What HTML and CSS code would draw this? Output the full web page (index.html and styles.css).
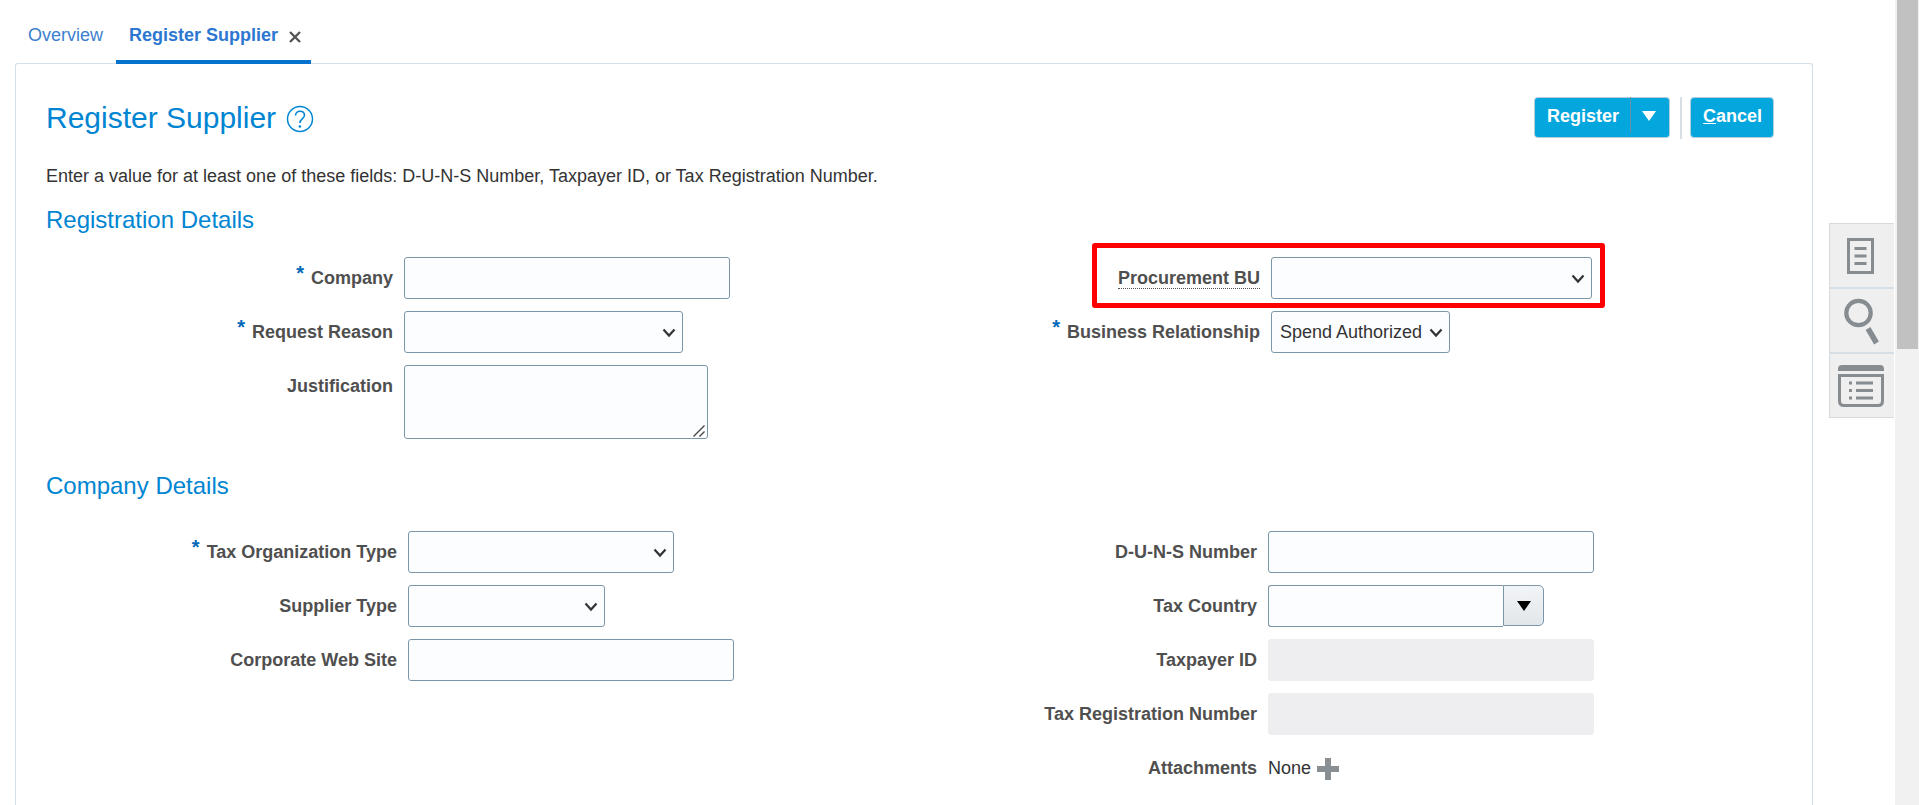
FILE: index.html
```html
<!DOCTYPE html>
<html lang="en">
<head>
    <meta charset="UTF-8">
    <meta name="viewport" content="width=device-width, initial-scale=1.0">
    <title>Register Supplier</title>
    <link rel="stylesheet" href="styles.css">
</head>
<body>
    <svg class="icon-defs" aria-hidden="true">
        <symbol id="chevron" viewBox="0 0 14 10">
            <path d="M1.5 1.5L7 7.5L12.5 1.5" fill="none" stroke="#333" stroke-width="2.2"/>
        </symbol>
    </svg>

    <main class="main">
        <nav class="tabs">
            <a href="#" class="tab">Overview</a>
            <div class="tab tab-active">
                <a href="#">Register Supplier</a>
                <button type="button" class="tab-close" aria-label="Close">
                    <svg width="12" height="12" viewBox="0 0 12 12"><path d="M1 1L11 11M11 1L1 11" stroke="#555" stroke-width="2.4"/></svg>
                </button>
            </div>
        </nav>

        <form class="panel" id="registerForm">
            <header class="panel-header">
                <h1>Register Supplier</h1>
                <button type="button" class="help" aria-label="Help">
                    <svg width="28" height="28" viewBox="0 0 28 28" fill="none" stroke="#0085d2">
                        <circle cx="14" cy="14" r="12.5" stroke-width="1.5"/>
                        <path d="M9.5 10.5C9.5 4.8 18.7 4.8 18.5 10.3C18.4 13.8 13.9 14.2 13.9 18" stroke-width="1.6"/>
                        <circle cx="13.9" cy="21.5" r="1.3" fill="#0085d2" stroke="none"/>
                    </svg>
                </button>
                <div class="actions">
                    <div class="split-button">
                        <button type="submit" class="btn btn-main">Register</button>
                        <button type="button" class="btn btn-menu" aria-label="More actions">
                            <svg width="14" height="10" viewBox="0 0 14 10"><path d="M0 0H14L7 10Z" fill="#fff"/></svg>
                        </button>
                    </div>
                    <span class="divider"></span>
                    <button type="button" class="btn"><u>C</u>ancel</button>
                </div>
            </header>

            <p class="hint">Enter a value for at least one of these fields: D-U-N-S Number, Taxpayer ID, or Tax Registration Number.</p>

            <section>
                <h2>Registration Details</h2>
                <div class="columns registration">
                    <div class="column">
                        <div class="row">
                            <label for="company"><span class="required">*</span>Company</label>
                            <input type="text" id="company" class="wide">
                        </div>
                        <div class="row">
                            <label for="reason"><span class="required">*</span>Request Reason</label>
                            <div class="select reason">
                                <select id="reason"><option></option></select>
                                <svg><use href="#chevron"/></svg>
                            </div>
                        </div>
                        <div class="row">
                            <label for="justification">Justification</label>
                            <div class="textarea">
                                <textarea id="justification"></textarea>
                                <svg viewBox="0 0 12 12"><path d="M0.5 11.5L11.5 0.5M6.5 11.5L11.5 6.5" stroke="#444" stroke-width="1.4"/></svg>
                            </div>
                        </div>
                    </div>
                    <div class="column">
                        <div class="row highlighted">
                            <label for="bu"><span class="dotted">Procurement BU</span></label>
                            <div class="select bu">
                                <select id="bu"><option></option></select>
                                <svg><use href="#chevron"/></svg>
                            </div>
                        </div>
                        <div class="row">
                            <label for="relationship"><span class="required">*</span>Business Relationship</label>
                            <div class="select relationship">
                                <select id="relationship"><option>Spend Authorized</option></select>
                                <svg><use href="#chevron"/></svg>
                            </div>
                        </div>
                    </div>
                </div>
            </section>

            <section>
                <h2>Company Details</h2>
                <div class="columns company">
                    <div class="column">
                        <div class="row">
                            <label for="orgType"><span class="required">*</span>Tax Organization Type</label>
                            <div class="select org-type">
                                <select id="orgType"><option></option></select>
                                <svg><use href="#chevron"/></svg>
                            </div>
                        </div>
                        <div class="row">
                            <label for="supplierType">Supplier Type</label>
                            <div class="select supplier-type">
                                <select id="supplierType"><option></option></select>
                                <svg><use href="#chevron"/></svg>
                            </div>
                        </div>
                        <div class="row">
                            <label for="site">Corporate Web Site</label>
                            <input type="text" id="site" class="wide">
                        </div>
                    </div>
                    <div class="column">
                        <div class="row">
                            <label for="duns">D-U-N-S Number</label>
                            <input type="text" id="duns" class="wide">
                        </div>
                        <div class="row">
                            <label for="country">Tax Country</label>
                            <div class="combo">
                                <input type="text" id="country">
                                <button type="button" aria-label="Search: Tax Country">
                                    <svg width="14" height="10" viewBox="0 0 14 10"><path d="M0 0H14L7 10Z"/></svg>
                                </button>
                            </div>
                        </div>
                        <div class="row">
                            <label for="taxpayer">Taxpayer ID</label>
                            <input type="text" id="taxpayer" class="wide" disabled>
                        </div>
                        <div class="row">
                            <label for="taxNumber">Tax Registration Number</label>
                            <input type="text" id="taxNumber" class="wide" disabled>
                        </div>
                        <div class="row">
                            <label for="attach">Attachments</label>
                            <div class="attachments">
                                None
                                <button type="button" id="attach" aria-label="Add attachment">
                                    <svg width="22" height="22" viewBox="0 0 22 22"><path d="M8 0H14V8H22V14H14V22H8V14H0V8H8Z" fill="#8a8f93"/></svg>
                                </button>
                            </div>
                        </div>
                    </div>
                </div>
            </section>
        </form>
    </main>

    <aside class="tools">
        <button type="button" aria-label="Worklist">
            <svg width="48" height="50" viewBox="0 0 48 50" fill="none" stroke="#868c90" stroke-width="3">
                <path d="M11.5 8.5H35.5V41.5H11.5Z"/>
                <path d="M17.500 17.500H29.500M17.500 25H29.500M17.500 32.500H29.500"/>
            </svg>
        </button>
        <button type="button" aria-label="Search">
            <svg width="48" height="50" viewBox="0 0 48 50" fill="none" stroke="#868c90">
                <circle cx="21.5" cy="17" r="12.2" stroke-width="4.2"/>
                <path d="M31 32.5L39.5 47" stroke-width="5.5"/>
            </svg>
        </button>
        <button type="button" aria-label="Contents">
            <svg width="48" height="50" viewBox="0 0 48 50" fill="none" stroke="#868c90" stroke-width="3">
                <path d="M1 10V8Q1 4 5 4H43Q47 4 47 8V10Z" fill="#868c90" stroke="none"/>
                <path d="M2.5 14.5H45.5V40Q45.5 44.5 41 44.5H7Q2.5 44.5 2.5 40Z"/>
                <path d="M12 22H15M19 22H36M12 29.5H15M19 29.5H36M12 37H15M19 37H36"/>
            </svg>
        </button>
    </aside>

    <div class="scrollbar"><div class="scrollbar-thumb"></div></div>
</body>
</html>
```

FILE: styles.css
```css
*, *::before {
    box-sizing: border-box;
}
body {
    font-family: "Liberation Sans", Arial, sans-serif;
    font-size: 18px;
    line-height: 20px;
    color: #333;
    background-color: #fff;
    margin: 0;
    display: flex;
    height: 100vh;
    overflow: hidden;
}
button, input, select, textarea {
    font: inherit;
    color: inherit;
    margin: 0;
}
button {
    padding: 0;
    border: none;
    background: none;
    cursor: pointer;
}
svg {
    display: block;
}
.icon-defs {
    position: absolute;
    width: 0;
    height: 0;
}
.main {
    flex: 1;
    display: flex;
    flex-direction: column;
    padding-left: 15px;
}

/* Tabs */
.tabs {
    display: flex;
    height: 64px;
    margin-bottom: -1px;
    z-index: 1;
}
.tab {
    padding: 25px 13px 0;
    color: #3c7fd0;
    text-decoration: none;
}
.tab a {
    color: #2c77d1;
    text-decoration: none;
}
.tab-active {
    display: flex;
    align-items: flex-start;
    gap: 11px;
    padding: 25px 10px 0 13px;
    font-weight: bold;
    border-bottom: 4px solid #0572ce;
}
.tab-close {
    padding-top: 6px;
}

/* Panel */
.panel {
    flex: 1;
    border: 1px solid #d6dfe6;
    border-bottom: none;
    border-radius: 3px 3px 0 0;
    padding: 33px 38px 0 30px;
}
.panel-header {
    display: flex;
    align-items: flex-start;
    height: 69px;
}
h1, h2 {
    margin: 0;
    font-weight: normal;
    color: #0085d2;
}
h1 {
    font-size: 30px;
    line-height: 42px;
}
h2 {
    font-size: 24px;
    line-height: 28px;
}
.help {
    padding: 8px 0 0 10px;
}
.actions {
    display: flex;
    gap: 8px;
    margin-left: auto;
}
.split-button {
    display: flex;
    margin-right: 2px;
}
.btn {
    height: 41px;
    padding: 0 11px 3px 12px;
    border: 1px solid #b5cfdc;
    border-radius: 4px;
    background-color: #03a7de;
    color: #fff;
    font-weight: bold;
}
.btn-main {
    border-right: none;
    border-radius: 4px 0 0 4px;
}
.btn-menu {
    position: relative;
    width: 40px;
    padding: 0 0 4px;
    border-left: none;
    border-radius: 0 4px 4px 0;
}
.btn-menu svg {
    margin: 0 auto;
}
/* thin line between the two halves, stops short of the bottom edge */
.btn-menu::before {
    content: "";
    position: absolute;
    left: 0;
    top: -1px;
    width: 1px;
    height: 36px;
    background-color: #5f93ac;
}
.divider {
    width: 2px;
    height: 42px;
    background-color: #d6dfe6;
}
.hint {
    margin: 0 0 20px;
}

/* Form rows */
.columns {
    display: grid;
    grid-template-columns: 1fr 1fr;
}
.column {
    display: flex;
    flex-direction: column;
    gap: 12px;
}
.row {
    position: relative;
    display: flex;
    align-items: flex-start;
    gap: 11px;
}
.row label {
    flex: none;
    padding-top: 11px;
    text-align: right;
    font-weight: bold;
    color: #4f4f4f;
}
.registration {
    column-gap: 6px;
    padding: 23px 0 33px;
}
.registration label {
    width: 347px;
}
.company {
    margin-right: 8px;
    padding-top: 31px;
}
.company label {
    width: 351px;
}
.required {
    margin-right: 7px;
    font-size: 20px;
    line-height: 0;
    vertical-align: 4px;
    color: #0067b8;
}
.dotted {
    border-bottom: 1px dotted #4f4f4f;
}
input, select, textarea {
    display: block;
    width: 100%;
    height: 42px;
    padding: 0 8px;
    border: 1px solid #7b96a8;
    border-radius: 3px;
    background-color: #fcfdff;
    color: #333;
}
input:disabled {
    border-color: #eeeef0;
    background-color: #eeeef0;
}
.wide {
    width: 326px;
}
.select, .textarea {
    position: relative;
}
.select select {
    appearance: none;
}
.select svg {
    position: absolute;
    right: 7px;
    top: 17px;
    width: 14px;
    height: 10px;
    pointer-events: none;
}
.reason {
    width: 279px;
}
.bu {
    width: 321px;
}
.relationship {
    width: 179px;
}
.org-type {
    width: 266px;
}
.supplier-type {
    width: 197px;
}
.textarea {
    width: 304px;
}
.textarea textarea {
    height: 74px;
    resize: none;
}
.textarea svg {
    position: absolute;
    right: 3px;
    bottom: 2px;
    width: 12px;
    height: 12px;
}
.highlighted::before {
    content: "";
    position: absolute;
    left: 179px;
    top: -14px;
    width: 513px;
    height: 65px;
    border: 5px solid #f00;
    border-radius: 3px;
    pointer-events: none;
}
.combo {
    display: flex;
    width: 276px;
}
.combo input {
    flex: 1;
    border-right: none;
    border-radius: 3px 0 0 3px;
}
.combo button {
    display: flex;
    align-items: center;
    justify-content: center;
    width: 41px;
    height: 41px;
    border: 1px solid #7b96a8;
    border-radius: 0 5px 5px 0;
    background: linear-gradient(#f3f5f7, #e1e6ea);
    color: #000;
}
.attachments {
    display: flex;
    gap: 6px;
    padding-top: 11px;
}

/* Side tools */
.tools {
    align-self: flex-start;
    width: 65px;
    margin: 223px 1px 0 16px;
    border: 1px solid #d6dbdf;
    border-right: none;
    background-color: #efefef;
}
.tools button {
    display: flex;
    align-items: center;
    justify-content: center;
    width: 64px;
    height: 63px;
    padding-right: 2px;
}
.tools button + button {
    height: 65px;
    border-top: 2px solid #d6dfe6;
}
.scrollbar {
    width: 24px;
    padding: 0 1px 0 2px;
    background-color: #f1f1f1;
}
.scrollbar-thumb {
    height: 349px;
    background-color: #c1c1c1;
}
```
